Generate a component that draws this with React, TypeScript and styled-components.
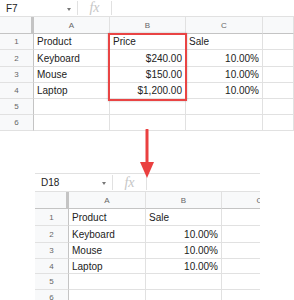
import { Fragment } from 'react'
import styled, { createGlobalStyle } from 'styled-components'

const GlobalStyle = createGlobalStyle`
  body {
    margin: 0;
    background: #fff;
    font-family: Arial, "Liberation Sans", sans-serif;
  }
`

const Page = styled.div`
  width: 294px;
  height: 300px;
  overflow: hidden;
  display: flex;
  flex-direction: column;
`

const Sheet = styled.div<{ $offset: number; $width: number; $framed?: boolean }>`
  margin-left: ${(p) => p.$offset}px;
  width: ${(p) => p.$width}px;
  overflow: hidden;
  flex-shrink: 0;
  border-top: ${(p) => (p.$framed ? '1px solid #e1e1e1' : 'none')};
`

const FormulaBar = styled.div<{ $height: number }>`
  display: flex;
  height: ${(p) => p.$height}px;
  border-bottom: 1px solid #e1e1e1;
  box-sizing: border-box;
`

const NameBox = styled.div`
  width: 78px;
  display: flex;
  align-items: center;
  justify-content: space-between;
  padding: 0 6px;
  box-sizing: border-box;
  font-size: 10px;
  color: #222;
  border-right: 1px solid #e1e1e1;
  margin: 1px 0;
`

const Caret = styled.span`
  width: 0;
  height: 0;
  border-left: 2.5px solid transparent;
  border-right: 2.5px solid transparent;
  border-top: 3px solid #777;
  margin-top: 2px;
`

const Fx = styled.div`
  width: 33px;
  display: flex;
  align-items: center;
  justify-content: center;
  font-family: "Liberation Serif", serif;
  font-style: italic;
  font-size: 14px;
  color: #c6c6c6;
  border-right: 1px solid #e1e1e1;
  margin: 1px 0;
`

const Grid = styled.div<{ $cols: string; $rows: string }>`
  display: grid;
  grid-template-columns: ${(p) => p.$cols};
  grid-template-rows: ${(p) => p.$rows};
`

type Pos = { $r: number; $c: number }

const Corner = styled.div`
  grid-area: 1 / 1;
  background: #f8f9fa;
  border-right: 3px solid #c4c4c4;
  border-bottom: 1px solid #c4c4c4;
`

const ColHeader = styled.div<Pos>`
  grid-area: ${(p) => p.$r} / ${(p) => p.$c};
  background: #f8f9fa;
  border-right: 1px solid #e1e1e1;
  border-bottom: 1px solid #c4c4c4;
  display: flex;
  align-items: center;
  justify-content: center;
  font-size: 8px;
  color: #666;
`

const RowHeader = styled.div<Pos>`
  grid-area: ${(p) => p.$r} / ${(p) => p.$c};
  background: #f8f9fa;
  border-right: 1px solid #c4c4c4;
  border-bottom: 1px solid #e1e1e1;
  display: flex;
  align-items: center;
  justify-content: center;
  font-size: 8px;
  color: #666;
`

const Cell = styled.div<Pos & { $right?: boolean }>`
  grid-area: ${(p) => p.$r} / ${(p) => p.$c};
  border-right: 1px solid #e1e1e1;
  border-bottom: 1px solid #e1e1e1;
  display: flex;
  align-items: center;
  justify-content: ${(p) => (p.$right ? 'flex-end' : 'flex-start')};
  padding: 0 3px;
  font-size: 10px;
  color: #222;
  white-space: nowrap;
  overflow: hidden;
`

const Highlight = styled.div`
  grid-area: 2 / 3 / 6 / 4;
  margin: -1px -1px -2px -2px;
  border: 2px solid #e94444;
  box-shadow: 0 0 2px rgba(0, 0, 0, 0.25);
  pointer-events: none;
  z-index: 1;
`

const ArrowGap = styled.div`
  height: 42px;
  position: relative;
  flex-shrink: 0;
`

const ArrowSvg = styled.svg`
  position: absolute;
  left: 139px;
  top: -2px;
  z-index: 2;
`

type SheetData = {
  name: string
  cols: string
  rows: string
  letters: string[]
  data: string[][]
  highlight?: boolean
}

const isNumber = (v: string) => /^[$\d]/.test(v)

function Spreadsheet({ sheet }: { sheet: SheetData }) {
  return (
    <>
      <FormulaBar $height={sheet.highlight ? 17 : 18}>
        <NameBox>
          {sheet.name}
          <Caret />
        </NameBox>
        <Fx>fx</Fx>
      </FormulaBar>
      <Grid $cols={sheet.cols} $rows={sheet.rows}>
        <Corner />
        {sheet.letters.map((l, i) => (
          <ColHeader key={i} $r={1} $c={i + 2}>
            {l}
          </ColHeader>
        ))}
        {sheet.data.map((row, r) => (
          <Fragment key={r}>
            <RowHeader $r={r + 2} $c={1}>
              {r + 1}
            </RowHeader>
            {row.map((v, c) => (
              <Cell key={c} $r={r + 2} $c={c + 2} $right={isNumber(v)}>
                {v}
              </Cell>
            ))}
          </Fragment>
        ))}
        {sheet.highlight && <Highlight />}
      </Grid>
    </>
  )
}

const before: SheetData = {
  name: 'F7',
  cols: '34px 76px 76px 77px 31px',
  rows: '17px 16px 17px 16px 16px 16px 16px',
  letters: ['A', 'B', 'C', ''],
  data: [
    ['Product', 'Price', 'Sale', ''],
    ['Keyboard', '$240.00', '10.00%', ''],
    ['Mouse', '$150.00', '10.00%', ''],
    ['Laptop', '$1,200.00', '10.00%', ''],
    ['', '', '', ''],
    ['', '', '', ''],
  ],
  highlight: true,
}

const after: SheetData = {
  name: 'D18',
  cols: '34px 77px 76px 76px',
  rows: '17px 17px 17px 16px 15px 16px 16px',
  letters: ['A', 'B', 'C'],
  data: [
    ['Product', 'Sale', ''],
    ['Keyboard', '10.00%', ''],
    ['Mouse', '10.00%', ''],
    ['Laptop', '10.00%', ''],
    ['', '', ''],
    ['', '', ''],
  ],
}

export default function App() {
  return (
    <Page>
      <GlobalStyle />
      <Sheet $offset={0} $width={294}>
        <Spreadsheet sheet={before} />
      </Sheet>
      <ArrowGap>
        <ArrowSvg width="16" height="52" viewBox="0 0 16 52">
          <line x1="8" y1="1" x2="8" y2="36" stroke="#ea4040" strokeWidth="3" strokeLinecap="round" />
          <polygon points="1,33 15,33 8,49" fill="#ea4040" />
        </ArrowSvg>
      </ArrowGap>
      <Sheet $offset={35} $width={225} $framed>
        <Spreadsheet sheet={after} />
      </Sheet>
    </Page>
  )
}
